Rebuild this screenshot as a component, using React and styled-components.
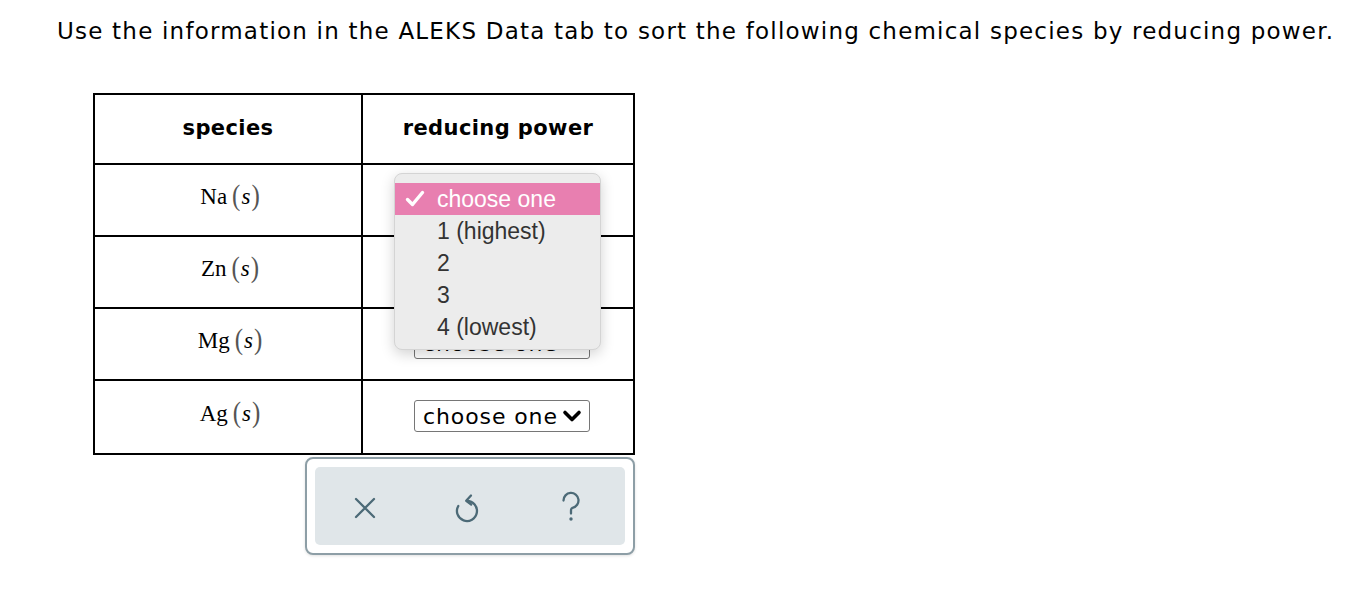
import React from "react";
import styled, { createGlobalStyle } from "styled-components";

const Global = createGlobalStyle`
  html, body { margin: 0; padding: 0; background: #fff; }
  body { font-family: "DejaVu Sans", Verdana, sans-serif; color: #000; }
`;

const Page = styled.div`
  width: 1360px;
  height: 614px;
  position: relative;
  overflow: hidden;
`;

const Prompt = styled.p`
  margin: 0;
  padding: 17px 0 0 57px;
  font-size: 23px;
  line-height: 28px;
  letter-spacing: 1.21px;
  white-space: nowrap;
`;

const Block = styled.div`
  margin: 48px 0 0 93px;
  width: 542px;
  position: relative;
`;

const Grid = styled.div`
  display: grid;
  grid-template-columns: 268px 270px;
  grid-template-rows: 70px 72px 72px 72px 72px;
  border: 2px solid #000;
  width: 538px;
`;

const Cell = styled.div`
  display: flex;
  align-items: center;
  justify-content: center;
  border-right: ${(p) => (p.$last ? "none" : "2px solid #000")};
  border-bottom: ${(p) => (p.$bottom ? "none" : "2px solid #000")};
`;

const Head = styled.span`
  font-family: "DejaVu Sans", Verdana, sans-serif;
  font-weight: bold;
  font-size: 21px;
  letter-spacing: 0.4px;
  margin-top: -3px;
`;

const Species = styled.span`
  font-family: "Liberation Serif", "Times New Roman", serif;
  font-size: 23px;
  margin-top: -8px;
  margin-left: 4px;
  display: inline-flex;
  align-items: baseline;
`;

const Paren = styled.span`
  color: #555;
  font-size: 25px;
  margin: ${(p) => (p.$open ? "0 1px 0 5px" : "0 0 0 1px")};
  transform: scaleY(1.15);
  display: inline-block;
`;

const Phase = styled.i`
  font-style: italic;
`;

const SelectBox = styled.div`
  display: flex;
  align-items: center;
  box-sizing: border-box;
  width: 176px;
  height: 32px;
  border: 1px solid #767676;
  border-radius: 3px;
  padding: 0 0 0 8px;
  margin-left: 8px;
  margin-top: -2px;
  font-family: "DejaVu Sans", Verdana, sans-serif;
  font-size: 22px;
  letter-spacing: 0.9px;
  color: #000;
  background: #fff;
  gap: 4px;
  white-space: nowrap;
`;

const Popup = styled.div`
  position: absolute;
  left: 301px;
  top: 80px;
  width: 207px;
  height: 177px;
  box-sizing: border-box;
  background: #ececec;
  border: 1px solid #d4d4d4;
  border-radius: 8px;
  box-shadow: 0 4px 14px rgba(0, 0, 0, 0.18);
  padding-top: 9px;
  font-family: "Liberation Sans", Arial, sans-serif;
  font-size: 23px;
  color: #333;
  z-index: 2;
`;

const Option = styled.div`
  display: flex;
  align-items: center;
  height: 32px;
  padding-left: 42px;
  position: relative;
  background: ${(p) => (p.$active ? "#e87fb0" : "transparent")};
  color: ${(p) => (p.$active ? "#fff" : "#333")};
`;

const Check = styled.svg`
  position: absolute;
  left: 10px;
  top: 7px;
`;

const Toolbar = styled.div`
  margin: 2px 0 0 212px;
  width: 330px;
  height: 98px;
  box-sizing: border-box;
  border: 2px solid #8d9ea6;
  border-radius: 8px;
  padding: 8px 8px;
  background: #fff;
  box-shadow: 0 1px 3px rgba(0, 0, 0, 0.12);
`;

const ToolInner = styled.div`
  height: 100%;
  background: #e0e6e9;
  border-radius: 5px;
  display: flex;
  align-items: center;
  justify-content: space-between;
  padding: 0 34px 0 30px;
`;

const ToolBtn = styled.button`
  border: none;
  background: transparent;
  padding: 0;
  width: 40px;
  height: 40px;
  display: flex;
  align-items: center;
  justify-content: center;
  color: #4c6a77;
  margin-top: 4px;
  flex-shrink: 0;
`;

const Chevron = () => (
  <svg width="20" height="14" viewBox="0 0 20 14">
    <path d="M3 3.5 L10 10.5 L17 3.5" fill="none" stroke="#000" strokeWidth="3.6" strokeLinecap="round" strokeLinejoin="round" />
  </svg>
);

const Select = () => (
  <SelectBox>
    <span>choose one</span>
    <Chevron />
  </SelectBox>
);

const species = ["Na", "Zn", "Mg", "Ag"];
const options = ["choose one", "1 (highest)", "2", "3", "4 (lowest)"];

export default function App() {
  return (
    <Page>
      <Global />
      <Prompt>Use the information in the ALEKS Data tab to sort the following chemical species by reducing power.</Prompt>
      <Block>
        <Grid>
          <Cell><Head>species</Head></Cell>
          <Cell $last><Head>reducing power</Head></Cell>
          {species.map((s, i) => (
            <React.Fragment key={s}>
              <Cell $bottom={i === species.length - 1}>
                <Species>
                  {s}
                  <Paren $open>(</Paren>
                  <Phase>s</Phase>
                  <Paren>)</Paren>
                </Species>
              </Cell>
              <Cell $last $bottom={i === species.length - 1}>
                <Select />
              </Cell>
            </React.Fragment>
          ))}
        </Grid>
        <Popup>
          {options.map((o, i) => (
            <Option key={o} $active={i === 0}>
              {i === 0 && (
                <Check width="20" height="18" viewBox="0 0 20 18">
                  <path d="M2.5 9.5 L7.5 14.5 L17.5 2.5" fill="none" stroke="#fff" strokeWidth="3.4" strokeLinecap="round" strokeLinejoin="round" />
                </Check>
              )}
              {o}
            </Option>
          ))}
        </Popup>
        <Toolbar>
          <ToolInner>
            <ToolBtn aria-label="clear">
              <svg width="26" height="26" viewBox="0 0 26 26">
                <path d="M4 4 L22 22 M22 4 L4 22" stroke="currentColor" strokeWidth="2.3" strokeLinecap="round" />
              </svg>
            </ToolBtn>
            <ToolBtn aria-label="undo">
              <svg width="30" height="34" viewBox="0 0 30 34">
                <path d="M14 10 A10 10 0 1 1 5.3 15" fill="none" stroke="currentColor" strokeWidth="2.3" strokeLinecap="round" />
                <path d="M18 4.5 L13.2 9.8 L18.2 13.5" fill="none" stroke="currentColor" strokeWidth="2.3" strokeLinecap="round" strokeLinejoin="round" />
              </svg>
            </ToolBtn>
            <ToolBtn aria-label="help">
              <svg width="24" height="34" viewBox="0 0 24 34">
                <path d="M4.5 9.5 A7.5 7.5 0 1 1 13.5 16.8 Q12 17.5 12 19.5 L12 22.5" fill="none" stroke="currentColor" strokeWidth="2.3" strokeLinecap="round" />
                <circle cx="12" cy="28" r="1.7" fill="currentColor" />
              </svg>
            </ToolBtn>
          </ToolInner>
        </Toolbar>
      </Block>
    </Page>
  );
}
